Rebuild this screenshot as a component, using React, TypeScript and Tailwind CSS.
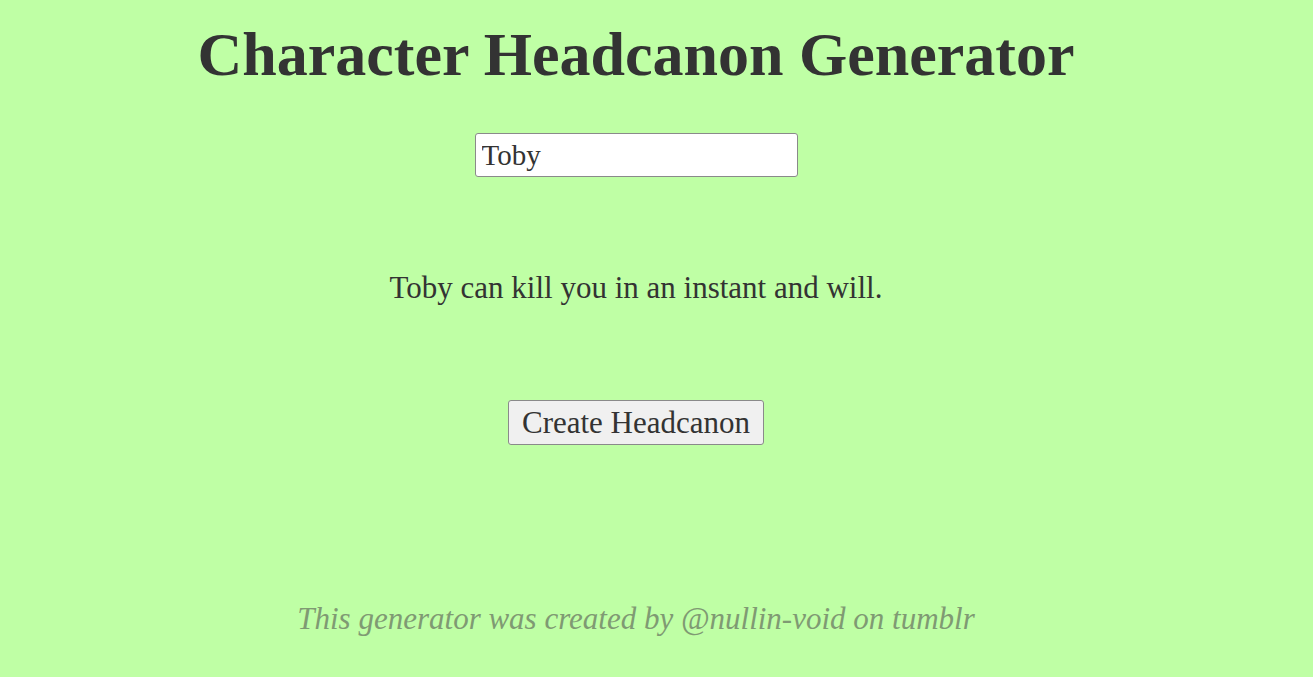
import { useState } from "react";

const headcanons = [
  "can kill you in an instant and will.",
  "secretly loves bad reality TV.",
  "hums when they're nervous.",
  "has a drawer full of mismatched socks.",
];

export default function App() {
  const [name, setName] = useState("Toby");
  const [line, setLine] = useState(0);

  return (
    <div className="min-h-screen w-full bg-[#bfffa5] font-['Liberation_Serif','Times_New_Roman',serif] text-[#333333]">
      <div className="flex w-[1272px] flex-col items-center text-center">
        <h1 className="pt-[19px] text-[62px] font-bold leading-[71px]">Character Headcanon Generator</h1>

        <input
          value={name}
          onChange={(e) => setName(e.target.value)}
          className="mt-[43px] h-[44px] w-[323px] rounded-[3px] border border-[#8a8a8a] bg-white pl-[6px] text-[29px] text-[#333333] outline-none"
        />

        <p className="mt-[93px] text-[31px] leading-[36px]">
          {name} {headcanons[line]}
        </p>

        <button
          onClick={() => setLine((line + 1) % headcanons.length)}
          className="mt-[94px] h-[45px] w-[256px] rounded-[3px] border border-[#8a8a8a] bg-[#f0f0f0] text-[31px] leading-none text-[#333333]"
        >
          Create Headcanon
        </button>

        <p className="mt-[156px] text-[31px] italic leading-[36px] text-[#7f9a73]">
          This generator was created by @nullin-void on tumblr
        </p>
      </div>
    </div>
  );
}
